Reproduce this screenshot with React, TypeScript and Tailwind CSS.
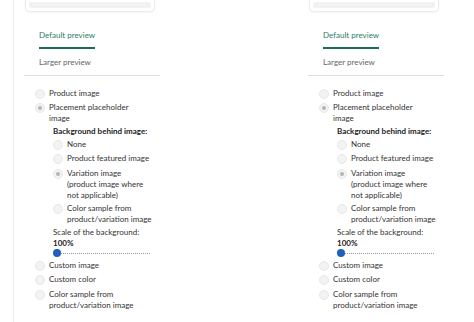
type Line = string;

function Radio({ checked, lines }: { checked?: boolean; lines: Line[] }) {
  return (
    <div className="flex items-start gap-[4px]">
      <span className="mt-[0.5px] flex h-[10px] w-[10px] shrink-0 items-center justify-center rounded-full border border-[#e8e8e8] bg-[#f3f3f3]">
        {checked && <span className="h-[4px] w-[4px] rounded-full bg-[#b5b5b5]" />}
      </span>
      <div className="text-[#333333]">
        {lines.map((l) => (
          <div key={l} className="h-[11px] leading-[11px]">
            {l}
          </div>
        ))}
      </div>
    </div>
  );
}

function Panel({ border }: { border: boolean }) {
  return (
    <div
      className={`ml-[13px] h-[322px] border-l ${border ? "border-[#eeeeee]" : "border-transparent"} overflow-hidden`}
    >
      {/* preview card, top cut off */}
      <div className="ml-[11px] mt-[-18px] h-[30px] w-[130px] rounded-[5px] border border-[#ececec] bg-white shadow-[0_1px_2px_rgba(0,0,0,0.05)] px-[3px] pt-[19px]">
        <div className="h-[6px] rounded-[2px] bg-[#f2f2f2]" />
      </div>

      {/* tabs */}
      <div className="ml-[10px] w-[136px] border-b border-[#dddddd] pl-[15px] pb-[7px]">
        <div className="mt-[18px] inline-block border-b-2 border-[#1f6b55] pb-[6px] text-[#2a7d63] leading-[11px]">
          Default preview
        </div>
        <div className="mt-[8px] text-[#666666] leading-[11px]">Larger preview</div>
      </div>

      {/* options */}
      <div className="ml-[21px] mt-[12px] flex flex-col">
        <Radio lines={["Product image"]} />
        <div className="mt-[3px]">
          <Radio checked lines={["Placement placeholder", "image"]} />
        </div>

        <div className="ml-[18px] mt-[2px] flex flex-col">
          <div className="h-[11px] font-bold leading-[11px] text-[#222222]">Background behind image:</div>
          <div className="mt-[2px]">
            <Radio lines={["None"]} />
          </div>
          <div className="mt-[3px]">
            <Radio lines={["Product featured image"]} />
          </div>
          <div className="mt-[4px]">
            <Radio checked lines={["Variation image", "(product image where", "not applicable)"]} />
          </div>
          <div className="mt-[2px]">
            <Radio lines={["Color sample from", "product/variation image"]} />
          </div>
          <div className="mt-[2px] h-[11px] leading-[11px] text-[#333333]">Scale of the background:</div>
          <div className="h-[11px] font-bold leading-[11px] text-[#222222]">100%</div>
          <div className="relative h-[8px] w-[97px]">
            <div className="absolute left-[5px] right-0 top-[4px] border-t border-dotted border-[#9a9a9a]" />
            <div className="absolute left-0 top-0 h-[8px] w-[8px] rounded-full bg-[#1f5fbf]" />
          </div>
        </div>

        <div className="mt-[3px]">
          <Radio lines={["Custom image"]} />
        </div>
        <div className="mt-[3px]">
          <Radio lines={["Custom color"]} />
        </div>
        <div className="mt-[4px]">
          <Radio lines={["Color sample from", "product/variation image"]} />
        </div>
      </div>
    </div>
  );
}

export default function App() {
  return (
    <div
      className="flex h-[322px] w-[474px] overflow-hidden bg-white text-[8px]"
      style={{ fontFamily: "Lato, 'Noto Sans', sans-serif" }}
    >
      <div className="w-[284px] shrink-0">
        <Panel border />
      </div>
      <div className="flex-1">
        <Panel border={false} />
      </div>
    </div>
  );
}
